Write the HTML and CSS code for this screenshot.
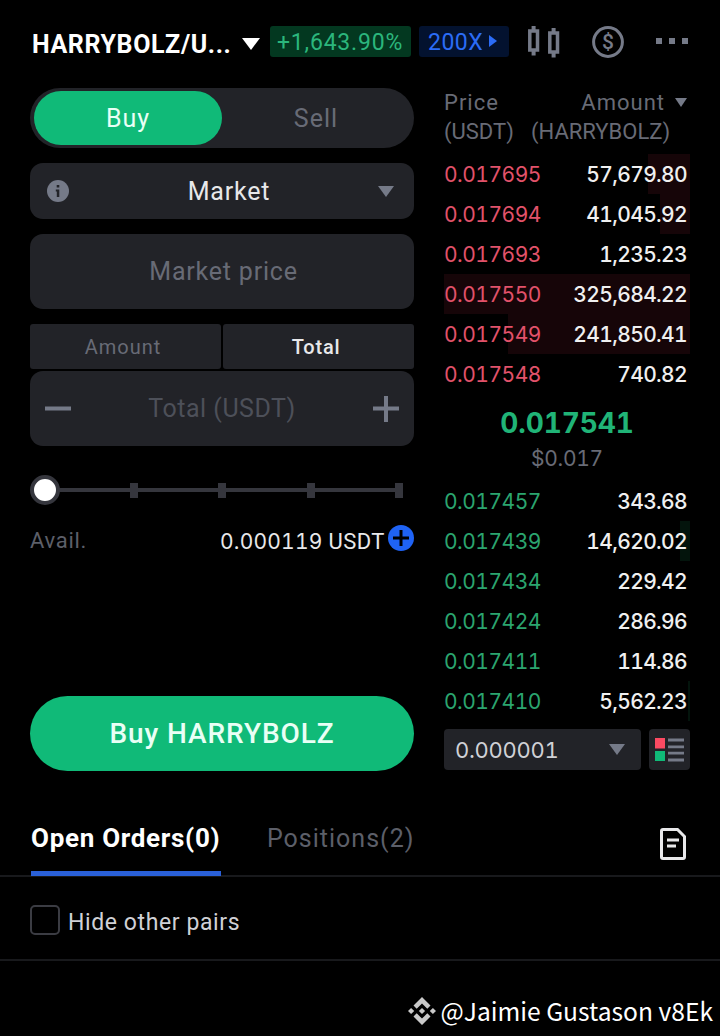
FILE: index.html
```html
<!DOCTYPE html>
<html lang="en">
<head>
  <meta charset="UTF-8" />
  <title>HARRYBOLZ/USDT</title>
  <link rel="stylesheet" href="styles.css">
</head>
<body>
  <header class="topbar">
    <div class="pair">HARRYBOLZ/U...</div>
    <svg class="pair-arrow" width="18" height="12" viewBox="0 0 18 12"><path d="M0 0h18L9 12z" fill="#fff"/></svg>
    <div class="badge change">+1,643.90%</div>
    <div class="badge leverage">200X <svg width="8" height="12" viewBox="0 0 8 12"><path d="M0 0l8 6-8 6z" fill="#2b6cf6"/></svg></div>
    <svg class="candles" width="34" height="32" viewBox="0 0 34 32" fill="none" stroke="#757a88" stroke-width="3.500">
      <path d="M2.800 5h7.700v19H2.800zM22.800 7h7.700v19h-7.700z"/>
      <path d="M6.600 0v5M6.600 24v5.500M26.600 2v5M26.600 26v5.500" stroke-width="4"/>
    </svg>
    <svg class="dollar" width="32" height="32" viewBox="0 0 32 32">
      <circle cx="16" cy="16" r="14.400" fill="none" stroke="#757a88" stroke-width="3"/>
      <text x="16" y="23" text-anchor="middle">$</text>
    </svg>
    <div class="dots"><i></i><i></i><i></i></div>
  </header>

  <main class="trade">
    <section class="form">
      <div class="side">
        <button class="side-btn active">Buy</button>
        <button class="side-btn">Sell</button>
      </div>
      <div class="box type">
        <svg width="22" height="22" viewBox="0 0 22 22"><circle cx="11" cy="11" r="11" fill="#757a88"/><path d="M9.700 5h2.600v2.500H9.700zM8.800 9.500h3.500V17H9.800v-5.500h-1z" fill="#222328"/></svg>
        <span class="label">Market</span>
        <svg width="16" height="11" viewBox="0 0 16 11"><path d="M0 0h16L8 11z" fill="#757a88"/></svg>
      </div>
      <div class="box price">Market price</div>
      <div class="unit">
        <div class="unit-tab">Amount</div>
        <div class="unit-tab active">Total</div>
      </div>
      <div class="box total">
        <svg width="26" height="26" viewBox="0 0 26 26"><path d="M0 12.500h26" stroke="#757a88" stroke-width="4"/></svg>
        <span class="label">Total (USDT)</span>
        <svg width="26" height="26" viewBox="0 0 26 26"><path d="M0 12.500h26M13 0v26" stroke="#757a88" stroke-width="4"/></svg>
      </div>
      <div class="slider"><b></b><i></i><i></i><i></i><i></i></div>
      <div class="avail">
        <span class="avail-label">Avail.</span>
        <span class="avail-value">0.000119 <em>USDT</em></span>
        <svg width="26" height="26" viewBox="0 0 26 26"><circle cx="13" cy="13" r="13" fill="#1f63f5"/><path d="M5 13h16M13 5v16" stroke="#000" stroke-width="3"/></svg>
      </div>
      <button class="submit">Buy HARRYBOLZ</button>
    </section>

    <section class="book">
      <div class="book-head">
        <div>Price</div>
        <div class="amount">Amount <svg width="12" height="9" viewBox="0 0 12 9"><path d="M0 0h12L6 9z" fill="#757a88"/></svg></div>
        <div class="tight">(USDT)</div>
        <div class="tight">(HARRYBOLZ)</div>
      </div>
      <div class="rows asks">
        <div class="row"><u style="width: 42px"></u><span>0.017695</span><span>57,679.80</span></div>
        <div class="row"><u style="width: 30px"></u><span>0.017694</span><span>41,045.92</span></div>
        <div class="row"><span>0.017693</span><span>1,235.23</span></div>
        <div class="row"><u style="width: 246px"></u><span>0.017550</span><span>325,684.22</span></div>
        <div class="row"><u style="width: 182px"></u><span>0.017549</span><span>241,850.41</span></div>
        <div class="row"><span>0.017548</span><span>740.82</span></div>
      </div>
      <div class="last">
        <div class="last-price">0.017541</div>
        <div class="last-usd">$0.017</div>
      </div>
      <div class="rows bids">
        <div class="row"><span>0.017457</span><span>343.68</span></div>
        <div class="row"><u style="width: 10px"></u><span>0.017439</span><span>14,620.02</span></div>
        <div class="row"><span>0.017434</span><span>229.42</span></div>
        <div class="row"><span>0.017424</span><span>286.96</span></div>
        <div class="row"><span>0.017411</span><span>114.86</span></div>
        <div class="row"><u style="width: 2px"></u><span>0.017410</span><span>5,562.23</span></div>
      </div>
      <div class="book-foot">
        <div class="step">0.000001 <svg width="16" height="11" viewBox="0 0 16 11"><path d="M0 0h16L8 11z" fill="#757a88"/></svg></div>
        <div class="view">
          <svg width="30" height="24" viewBox="0 0 30 24">
            <path d="M0 0h10v10.500H0z" fill="#fb4a62"/>
            <path d="M0 13h10v10H0z" fill="#10ba78"/>
            <path d="M13 2h16M13 8.800h16M13 15.200h16M13 22h16" stroke="#757a88" stroke-width="2.800"/>
          </svg>
        </div>
      </div>
    </section>
  </main>

  <nav class="tabs">
    <div class="tab active">Open Orders(0)</div>
    <div class="tab">Positions(2)</div>
    <svg class="doc" width="26" height="32" viewBox="0 0 26 32" fill="none" stroke="#e8e8ea" stroke-width="3">
      <path d="M3 1.500h14.500l7 7V29q0 1.500-1.500 1.500H3q-1.500 0-1.500-1.500V3q0-1.500 1.500-1.500z"/>
      <path d="M7 12h12M7 18h9"/>
    </svg>
  </nav>

  <div class="filter">
    <div class="checkbox"></div>
    <span>Hide other pairs</span>
  </div>

  <footer class="author">
    <svg width="28" height="28" viewBox="0 0 28 28" fill="#c9c9c9">
      <path d="M14 0l8.500 8.500-3.200 3.200L14 6.400l-5.300 5.300-3.200-3.200zM14 28l8.500-8.500-3.200-3.200-5.300 5.300-5.300-5.300-3.200 3.200zM14 10.900l3.100 3.100-3.100 3.100-3.100-3.100zM3.100 10.900L6.200 14l-3.100 3.100L0 14zM24.900 10.900L28 14l-3.100 3.100-3.100-3.100z"/>
    </svg>
    <span>@Jaimie Gustason v8Ek</span>
  </footer>
</body>
</html>
```
FILE: styles.css
```css
* {
  box-sizing: border-box;
}
body {
  margin: 0;
  background: #000;
  color: #e8e8ea;
  font-family: Roboto, sans-serif;
  height: 1036px;
  overflow: hidden;
  white-space: nowrap;
}
svg {
  display: block;
  flex: none;
}
button {
  border: none;
  padding: 0;
  font-family: inherit;
  color: #fff;
}

/* top bar */
.topbar {
  display: flex;
  height: 88px;
  padding: 26px 31px 0 32px;
}
.pair {
  width: 210px;
  line-height: 37px;
  font-size: 25px;
  font-weight: 700;
  letter-spacing: 0.6px;
  color: #fff;
}
.pair-arrow {
  margin: 12px 10px 0 0;
}
.badge {
  display: flex;
  align-items: center;
  height: 31px;
  padding-top: 2px;
  border-radius: 3px;
  font-size: 23px;
}
.change {
  width: 141px;
  padding-left: 7px;
  background: #033820;
  color: #2bb67c;
  letter-spacing: 0.8px;
}
.leverage {
  width: 90px;
  margin-left: 8px;
  padding-left: 9px;
  gap: 6px;
  background: #03122f;
  color: #2b6cf6;
  letter-spacing: 0.5px;
}
.leverage svg {
  margin-bottom: 3px;
}
.candles {
  margin-left: 18px;
}
.dollar {
  margin-left: 31px;
}
.dollar text {
  font-size: 21px;
  font-weight: 500;
  fill: #757a88;
}
.dots {
  display: flex;
  gap: 7px;
  margin: 12px 0 0 32px;
}
.dots i {
  width: 6px;
  height: 6px;
  background: #757a88;
}

/* order form */
.trade {
  display: flex;
  gap: 30px;
  height: 683px;
  padding: 0 30px;
}
.form {
  display: flex;
  flex-direction: column;
  width: 384px;
}
.side {
  display: flex;
  height: 60px;
  padding: 3px 4px;
  border-radius: 30px;
  background: #222328;
}
.side-btn {
  flex: 1;
  border-radius: 27px;
  background: none;
  color: #686b76;
  font-size: 25px;
  letter-spacing: 1px;
}
.side-btn.active {
  background: #10ba78;
  color: #e9fff5;
}
.box {
  display: flex;
  align-items: center;
  justify-content: space-between;
  border-radius: 13px;
  background: #222328;
  font-size: 25px;
  letter-spacing: 0.8px;
}
.type {
  height: 56px;
  margin-top: 15px;
  padding: 0 20px 0 17px;
}
.type .label {
  padding-left: 11px;
}
.price {
  height: 75px;
  margin-top: 15px;
  padding-left: 3px;
  justify-content: center;
  color: #686b76;
}
.unit {
  display: flex;
  gap: 2px;
  height: 45px;
  margin-top: 15px;
}
.unit-tab {
  flex: 1;
  padding-right: 5px;
  border-radius: 3px;
  background: #222328;
  color: #686b76;
  font-size: 20px;
  line-height: 46px;
  letter-spacing: 1px;
  text-align: center;
}
.unit-tab.active {
  color: #e8e8ea;
  font-weight: 500;
  letter-spacing: 0.8px;
}
.total {
  height: 75px;
  margin-top: 2px;
  padding: 0 15px;
}
.total .label {
  color: #4d5059;
  letter-spacing: 0.5px;
}
.slider {
  display: flex;
  align-items: center;
  justify-content: space-between;
  height: 30px;
  margin: 29px 11px 0 0;
  background: linear-gradient(#35363d, #35363d) 15px center / calc(100% - 15px) 4px no-repeat;
}
.slider b {
  width: 30px;
  height: 30px;
  margin-right: -11px;
  border: 4px solid #35363d;
  border-radius: 50%;
  background: #fff;
}
.slider i {
  width: 8px;
  height: 15px;
  background: #35363d;
}
.avail {
  display: flex;
  align-items: center;
  height: 30px;
  margin-top: 18px;
  font-size: 22px;
}
.avail-label {
  flex: 1;
  padding-top: 5px;
  color: #5c5f69;
  letter-spacing: 0.7px;
}
.avail-value {
  margin: 6px 3px 0 0;
  font-family: Inter, sans-serif;
  font-size: 21px;
  font-variant-numeric: tabular-nums;
  letter-spacing: 0.2px;
}
.avail-value em {
  font-family: Roboto, sans-serif;
  font-style: normal;
  font-size: 22px;
  letter-spacing: 0.5px;
}
.submit {
  height: 75px;
  margin-top: auto;
  border-radius: 38px;
  background: #10ba78;
  color: #e9fff5;
  font-size: 28px;
  font-weight: 500;
  letter-spacing: 0.9px;
}

/* order book */
.book {
  width: 246px;
}
.book-head {
  display: grid;
  grid-template-columns: 87px 1fr;
  align-content: start;
  height: 66px;
  line-height: 29px;
  color: #686b76;
  font-size: 22px;
  letter-spacing: 1px;
}
.amount {
  display: flex;
  align-items: center;
  justify-content: flex-end;
  gap: 10px;
  padding-right: 3px;
}
.tight {
  letter-spacing: 0;
}
.row {
  display: flex;
  position: relative;
  justify-content: space-between;
  height: 40px;
  padding-right: 3px;
  line-height: 41px;
  font-family: Inter, sans-serif;
  font-size: 21px;
  font-weight: 500;
  font-variant-numeric: tabular-nums;
  letter-spacing: -0.65px;
  color: #f0f0f0;
}
.row span {
  position: relative;
}
/* depth bar behind the row */
.row u {
  position: absolute;
  top: 0;
  right: 0;
  height: 40px;
}
.asks u {
  background: #160508;
}
.bids u {
  background: #03140c;
}
.asks span:nth-last-child(2),
.bids span:nth-last-child(2) {
  font-weight: 400;
  letter-spacing: -0.5px;
}
.asks span:nth-last-child(2) {
  color: #e2526a;
}
.bids span:nth-last-child(2) {
  color: #2ba56f;
}
.last {
  height: 87px;
  padding-top: 10px;
  text-align: center;
  font-family: Inter, sans-serif;
  font-variant-numeric: tabular-nums;
}
.last-price {
  line-height: 38px;
  font-size: 28px;
  font-weight: 700;
  letter-spacing: -0.1px;
  color: #20b477;
}
.last-usd {
  line-height: 33px;
  font-size: 21px;
  letter-spacing: -0.3px;
  color: #686b76;
}
.book-foot {
  display: flex;
  gap: 8px;
  height: 41px;
  margin-top: 8px;
}
.step {
  display: flex;
  align-items: center;
  justify-content: space-between;
  width: 197px;
  padding: 0 16px 0 11px;
  border-radius: 4px;
  background: #222328;
  font-family: Inter, sans-serif;
  font-size: 22px;
  font-variant-numeric: tabular-nums;
  letter-spacing: -0.3px;
  color: #d0d1d6;
}
.view {
  flex: 1;
  padding: 9px 0 0 6px;
  border-radius: 4px;
  background: #222328;
}

/* orders */
.tabs {
  display: flex;
  height: 106px;
  padding: 46px 34px 0 31px;
  border-bottom: 2px solid #18191c;
}
.tab {
  height: 59px;
  margin-right: 46px;
  line-height: 43px;
  font-size: 25px;
  letter-spacing: 1px;
  color: #5c5f69;
}
.tab.active {
  width: 190px;
  border-bottom: 5px solid #2a60d8;
  color: #fff;
  font-size: 26px;
  font-weight: 700;
  letter-spacing: 0.7px;
}
.doc {
  margin: 11px 0 0 auto;
}
.filter {
  display: flex;
  align-items: center;
  gap: 8px;
  height: 84px;
  padding: 4px 30px 0;
  border-bottom: 2px solid #18191c;
  font-size: 23px;
  letter-spacing: 0.6px;
  color: #d0d1d6;
}
.filter span {
  padding-top: 4px;
}
.checkbox {
  width: 30px;
  height: 30px;
  border: 2px solid #3b3c43;
  border-radius: 5px;
}
.author {
  display: flex;
  align-items: center;
  justify-content: flex-end;
  gap: 4px;
  height: 56px;
  margin-top: 22px;
  padding-right: 7px;
  font-family: "Noto Sans CJK SC", sans-serif;
  font-size: 24.6px;
  color: #fff;
}
.author span {
  margin-top: -2px;
}
```
